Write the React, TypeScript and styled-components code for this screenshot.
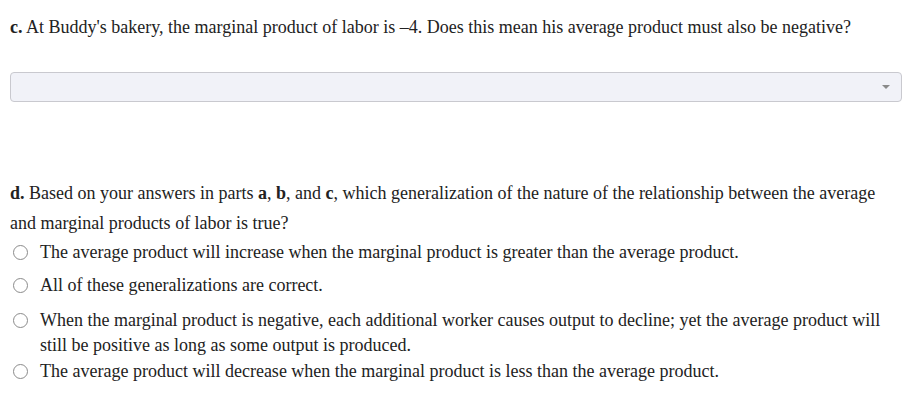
import React from "react";
import styled, { createGlobalStyle } from "styled-components";

const Global = createGlobalStyle`
  html, body { margin: 0; padding: 0; background: #fff; }
  body { font-family: "Liberation Serif", "Times New Roman", serif; color: #222; }
`;

const Page = styled.div`
  padding: 12px 14px 0 10px;
  font-size: 18px;
`;

const Question = styled.p`
  margin: 0;
  line-height: 30px;
`;

const Select = styled.div`
  margin-top: 30px;
  height: 28px;
  border: 1px solid #c9c9cf;
  border-radius: 4px;
  background: #f1f2f8;
  display: flex;
  align-items: center;
  justify-content: flex-end;
  padding-right: 11px;
`;

const Caret = styled.span`
  width: 0;
  height: 0;
  border-left: 4px solid transparent;
  border-right: 4px solid transparent;
  border-top: 4px solid #8a8a8a;
`;

const PartD = styled.p`
  margin: 76px 0 0 0;
  line-height: 30px;
`;

const Options = styled.div`
  display: flex;
  flex-direction: column;
`;

const Option = styled.label<{ $mt: number }>`
  display: flex;
  align-items: flex-start;
  gap: 12px;
  line-height: 25px;
  margin-top: ${(p) => p.$mt}px;
`;

const Radio = styled.span`
  flex: none;
  width: 15px;
  height: 15px;
  margin: 5px 0 0 3px;
  border: 1.6px solid #8b8b8b;
  border-radius: 50%;
  box-sizing: border-box;
  background: #fff;
`;

const options = [
  "The average product will increase when the marginal product is greater than the average product.",
  "All of these generalizations are correct.",
  "When the marginal product is negative, each additional worker causes output to decline; yet the average product will still be positive as long as some output is produced.",
  "The average product will decrease when the marginal product is less than the average product.",
];

const gaps = [1.5, 8, 10, 1];

export default function App() {
  return (
    <>
      <Global />
      <Page>
        <Question>
          <b>c.</b> At Buddy's bakery, the marginal product of labor is –4. Does this mean his average product must also be negative?
        </Question>
        <Select>
          <Caret />
        </Select>
        <PartD>
          <b>d.</b> Based on your answers in parts <b>a</b>, <b>b</b>, and <b>c</b>, which generalization of the nature of the relationship between the average and marginal products of labor is true?
        </PartD>
        <Options>
          {options.map((o, i) => (
            <Option key={i} $mt={gaps[i]}>
              <Radio />
              <span>{o}</span>
            </Option>
          ))}
        </Options>
      </Page>
    </>
  );
}
